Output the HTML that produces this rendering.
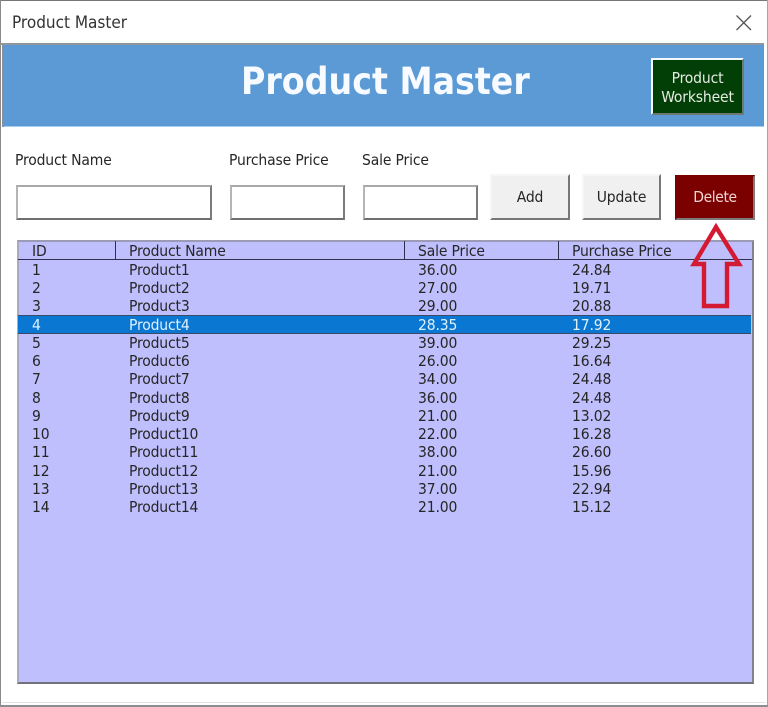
<!DOCTYPE html>
<html>
<head>
<meta charset="utf-8">
<style>
html,body{margin:0;padding:0;width:768px;height:707px;overflow:hidden;background:#fff;}
body{position:relative;font-family:"DejaVu Sans","Liberation Sans",sans-serif;font-stretch:condensed;color:#262626;font-size:15.5px;letter-spacing:-.15px;}
.a{position:absolute;white-space:nowrap;}
.l{line-height:20px;height:20px;}
.inp{position:absolute;box-sizing:border-box;background:#fff;border:2px solid;border-color:#a9a9a9 #7b7b7b #6f6f6f #b5b5b5;}
.btn{position:absolute;box-sizing:border-box;text-align:center;background:#f0f0f0;border:2px solid;border-color:#f6f6f6 #777 #777 #f6f6f6;}
.row{position:absolute;left:18px;width:733px;height:18px;line-height:18px;}
.row span{position:absolute;top:0;white-space:nowrap;}
.c1{left:14px}.c2{left:111px}.c3{left:400px}.c4{left:554px}
.sel{background:#0a78d2;color:#dff0ff;border-top:1px solid #3b4a66;border-bottom:1px solid #3b4a66;box-sizing:border-box;height:19px;line-height:19px;}
</style>
</head>
<body>
<div class="a" style="left:0;top:0;width:768px;height:1px;background:#77777a"></div>
<div class="a" style="left:0;top:0;width:1px;height:707px;background:#8a8a8a"></div>
<div class="a" style="left:767px;top:0;width:1px;height:707px;background:#a5a5a5"></div>
<div class="a" style="left:0;top:705px;width:768px;height:2px;background:#8d8d93"></div>
<div class="a" style="left:2px;top:702px;width:764px;height:1px;background:#e3e3e3"></div>

<div class="a" style="left:12px;top:13px;line-height:20px;color:#333;font-size:17px;letter-spacing:0;">Product Master</div>
<svg class="a" style="left:734px;top:13px" width="20" height="20" viewBox="0 0 20 20"><path d="M2.5 2.5L17 17M17 2.5L2.5 17" stroke="#555" stroke-width="1.3" fill="none"/></svg>

<div class="a" style="left:0;top:43px;width:764px;height:2px;background:#8f969c"></div>
<div class="a" style="left:2px;top:45px;width:2px;height:82px;background:#8a8f95"></div>
<div class="a" style="left:4px;top:45px;width:760px;height:82px;background:#5b9ad5"></div>
<div class="a" style="left:4px;top:126px;width:760px;height:1px;background:#a5cdf0"></div>
<div class="a" style="left:241px;top:59px;height:46px;line-height:46px;font-size:37px;letter-spacing:0;font-weight:bold;color:#f7fbff;">Product Master</div>

<div class="btn" style="left:651px;top:58px;width:93px;height:57px;background:#023f06;color:#e4ebe2;border-color:#f4f8fb #6d7a72 #6d7a72 #f4f8fb;line-height:19px;padding-top:9px;">Product<br>Worksheet</div>

<div class="a l" style="left:15px;top:150px;">Product Name</div>
<div class="a l" style="left:229px;top:150px;">Purchase Price</div>
<div class="a l" style="left:362px;top:150px;">Sale Price</div>

<div class="inp" style="left:16px;top:185px;width:196px;height:35px;"></div>
<div class="inp" style="left:230px;top:185px;width:115px;height:35px;"></div>
<div class="inp" style="left:363px;top:185px;width:115px;height:35px;"></div>

<div class="btn" style="left:490px;top:174px;width:80px;height:46px;line-height:42px;">Add</div>
<div class="btn" style="left:582px;top:174px;width:79px;height:46px;line-height:42px;">Update</div>
<div class="btn" style="left:675px;top:175px;width:80px;height:45px;background:#7b0000;color:#f1d5d5;border-color:#7b0000 #7c7c7c #7c7c7c #7b0000;line-height:41px;letter-spacing:-.4px;">Delete</div>

<div class="a" style="left:17px;top:240px;width:737px;height:444px;box-sizing:border-box;background:#bfbffd;border:2px solid;border-color:#9b9bb5 #82828e #72727c #a9a9c0;"></div>
<div class="a" style="left:18px;top:259px;width:734px;height:1px;background:#2f3050"></div>
<div class="a" style="left:115px;top:241px;width:1px;height:18px;background:#2f3050"></div>
<div class="a" style="left:404px;top:241px;width:1px;height:18px;background:#2f3050"></div>
<div class="a" style="left:558px;top:241px;width:1px;height:18px;background:#2f3050"></div>

<div class="row" style="top:242px"><span class="c1">ID</span><span class="c2">Product Name</span><span class="c3">Sale Price</span><span class="c4">Purchase Price</span></div>
<div class="row" style="top:261px"><span class="c1">1</span><span class="c2">Product1</span><span class="c3">36.00</span><span class="c4">24.84</span></div>
<div class="row" style="top:279px"><span class="c1">2</span><span class="c2">Product2</span><span class="c3">27.00</span><span class="c4">19.71</span></div>
<div class="row" style="top:297px"><span class="c1">3</span><span class="c2">Product3</span><span class="c3">29.00</span><span class="c4">20.88</span></div>
<div class="row sel" style="top:315px"><span class="c1">4</span><span class="c2">Product4</span><span class="c3">28.35</span><span class="c4">17.92</span></div>
<div class="row" style="top:334px"><span class="c1">5</span><span class="c2">Product5</span><span class="c3">39.00</span><span class="c4">29.25</span></div>
<div class="row" style="top:352px"><span class="c1">6</span><span class="c2">Product6</span><span class="c3">26.00</span><span class="c4">16.64</span></div>
<div class="row" style="top:370px"><span class="c1">7</span><span class="c2">Product7</span><span class="c3">34.00</span><span class="c4">24.48</span></div>
<div class="row" style="top:389px"><span class="c1">8</span><span class="c2">Product8</span><span class="c3">36.00</span><span class="c4">24.48</span></div>
<div class="row" style="top:407px"><span class="c1">9</span><span class="c2">Product9</span><span class="c3">21.00</span><span class="c4">13.02</span></div>
<div class="row" style="top:425px"><span class="c1">10</span><span class="c2">Product10</span><span class="c3">22.00</span><span class="c4">16.28</span></div>
<div class="row" style="top:443px"><span class="c1">11</span><span class="c2">Product11</span><span class="c3">38.00</span><span class="c4">26.60</span></div>
<div class="row" style="top:462px"><span class="c1">12</span><span class="c2">Product12</span><span class="c3">21.00</span><span class="c4">15.96</span></div>
<div class="row" style="top:480px"><span class="c1">13</span><span class="c2">Product13</span><span class="c3">37.00</span><span class="c4">22.94</span></div>
<div class="row" style="top:498px"><span class="c1">14</span><span class="c2">Product14</span><span class="c3">21.00</span><span class="c4">15.12</span></div>

<svg class="a" style="left:688px;top:220px" width="56" height="92" viewBox="0 0 56 92"><path d="M28 7L51 44H39V86H16V44H6Z" fill="none" stroke="#d41a32" stroke-width="4.4" stroke-linejoin="miter"/></svg>
</body>
</html>
